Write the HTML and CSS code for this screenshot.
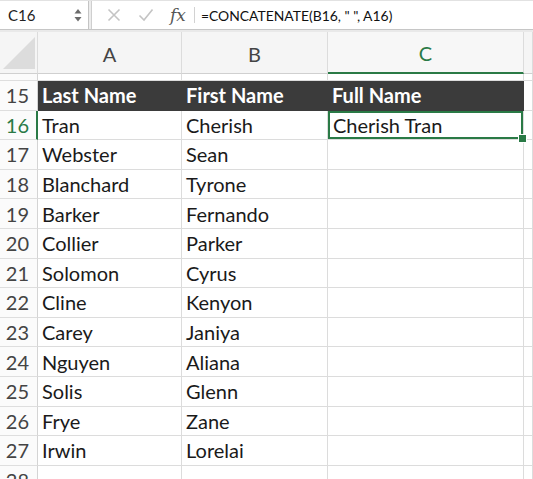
FILE: index.html
```html
<!DOCTYPE html>
<html>
<head>
<meta charset="utf-8">
<link rel="stylesheet" href="styles.css">
</head>
<body>
<div class="formula-bar">
  <div class="namebox">
    <span class="ref">C16</span>
    <svg class="spin" width="8" height="18" viewBox="0 0 8 18"><path d="M4 3 L7.5 7.5 L0.5 7.5 Z" fill="#6b6b6b"/><path d="M4 15.5 L7.5 11 L0.5 11 Z" fill="#6b6b6b"/></svg>
  </div>
  <div class="fgap"></div>
  <div class="fbtns">
    <svg class="ico" width="14" height="14" viewBox="0 0 14 14"><path d="M1.5 1.5 L12.5 12.5 M12.5 1.5 L1.5 12.5" stroke="#c4c4c4" stroke-width="1.6" fill="none"/></svg>
    <svg class="ico" width="16" height="14" viewBox="0 0 16 14"><path d="M1.5 7.5 L6 12 L14.5 1.5" stroke="#c4c4c4" stroke-width="1.6" fill="none"/></svg>
    <span class="fx">fx</span>
  </div>
  <div class="formula">=CONCATENATE(B16, " ", A16)</div>
</div>
<div class="sheet">
  <div class="ch corner"><svg width="38" height="42" viewBox="0 0 38 42"><path d="M3 37 L35 5 L35 37 Z" fill="#dcdcdc"/></svg></div>
  <div class="ch">A</div>
  <div class="ch">B</div>
  <div class="ch sel-col">C</div>
  <div class="ch"></div>

  <div class="rh part"></div><div class="c part"></div><div class="c part"></div><div class="c part"></div><div class="c part"></div>

  <div class="rh">15</div><div class="c hd">Last Name</div><div class="c hd">First Name</div><div class="c hd">Full Name</div><div class="c"></div>
  <div class="rh sel-row">16</div><div class="c">Tran</div><div class="c">Cherish</div><div class="c sel">Cherish Tran</div><div class="c"></div>
  <div class="rh">17</div><div class="c">Webster</div><div class="c">Sean</div><div class="c"></div><div class="c"></div>
  <div class="rh">18</div><div class="c">Blanchard</div><div class="c">Tyrone</div><div class="c"></div><div class="c"></div>
  <div class="rh">19</div><div class="c">Barker</div><div class="c">Fernando</div><div class="c"></div><div class="c"></div>
  <div class="rh">20</div><div class="c">Collier</div><div class="c">Parker</div><div class="c"></div><div class="c"></div>
  <div class="rh">21</div><div class="c">Solomon</div><div class="c">Cyrus</div><div class="c"></div><div class="c"></div>
  <div class="rh">22</div><div class="c">Cline</div><div class="c">Kenyon</div><div class="c"></div><div class="c"></div>
  <div class="rh">23</div><div class="c">Carey</div><div class="c">Janiya</div><div class="c"></div><div class="c"></div>
  <div class="rh">24</div><div class="c">Nguyen</div><div class="c">Aliana</div><div class="c"></div><div class="c"></div>
  <div class="rh">25</div><div class="c">Solis</div><div class="c">Glenn</div><div class="c"></div><div class="c"></div>
  <div class="rh">26</div><div class="c">Frye</div><div class="c">Zane</div><div class="c"></div><div class="c"></div>
  <div class="rh">27</div><div class="c">Irwin</div><div class="c">Lorelai</div><div class="c"></div><div class="c"></div>
  <div class="rh">28</div><div class="c"></div><div class="c"></div><div class="c"></div><div class="c"></div>
</div>
</body>
</html>
```
FILE: styles.css
```css
* { box-sizing: border-box; }
html, body { margin: 0; padding: 0; background: #fff; overflow: hidden; }
body { width: 533px; height: 479px; font-family: Lato, "Open Sans", sans-serif; color: #1a1a1a; }

.formula-bar {
  display: flex;
  align-items: stretch;
  height: 30px;
  border-bottom: 1px solid #c6c6c6;
  border-top: 1px solid #e2e2e2;
  background: #fff;
}
.namebox {
  width: 89px;
  display: flex;
  align-items: center;
  justify-content: space-between;
  padding: 0 6px 0 8px;
  border-right: 1px solid #c4c4c4;
}
.ref { font-size: 15px; color: #222; }
.fgap { width: 3px; background: #ececec; border-right: 1px solid #cfcfcf; }
.fbtns {
  display: flex;
  align-items: center;
  gap: 17px;
  padding: 0 8px 0 15px;
  border-right: 1px solid #d2d2d2;
  margin: 6px 0;
}
.fx { font-family: "DejaVu Serif", "Liberation Serif", serif; font-style: italic; font-size: 17px; color: #555; margin-left: -1px; }
.formula { display: flex; align-items: center; padding-left: 6px; font-size: 13.9px; color: #111; }

.sheet {
  display: grid;
  grid-template-columns: 38px 144px 146px 196px 1fr;
  grid-template-rows: 42px 7px repeat(14, 29.6px);
  border-top: 2px solid #e9e9e9;
}
.ch {
  background: #f5f5f5;
  border-right: 1px solid #dcdcdc;
  border-bottom: 1px solid #d0d0d0;
  display: flex;
  align-items: center;
  justify-content: center;
  font-size: 20px;
  color: #444;
  padding-top: 2px;
}
.ch.corner { padding: 0; display: block; }
.ch.corner svg { display: block; }
.ch.sel-col { color: #2a7a46; border-bottom: 2px solid #2a7a46; background: #f7f7f7; }

.rh {
  background: #fbfbfb;
  border-right: 1px solid #d4d4d4;
  border-bottom: 1px solid #dedede;
  font-size: 20px;
  color: #444;
  display: flex;
  align-items: center;
  justify-content: flex-end;
  padding-right: 8px;
}
.rh.sel-row { color: #2a7a46; border-right: 2px solid #2a7a46; padding-right: 7px; }
.c {
  border-right: 1px solid #dcdcdc;
  border-bottom: 1px solid #dcdcdc;
  font-size: 20px;
  display: flex;
  align-items: center;
  padding-left: 4px;
  white-space: nowrap;
}
.c.hd { background: #3b3b3b; color: #fff; font-weight: bold; border-right-color: #3b3b3b; border-bottom-color: #3b3b3b; }
.c.sel { position: relative; box-shadow: inset 0 0 0 2px #2a7a46; padding-left: 5px; }
.c.sel::after {
  content: "";
  position: absolute;
  right: -4px;
  bottom: -4px;
  width: 7px;
  height: 7px;
  background: #2a7a46;
  border: 1px solid #fff;
  z-index: 2;
}
```
